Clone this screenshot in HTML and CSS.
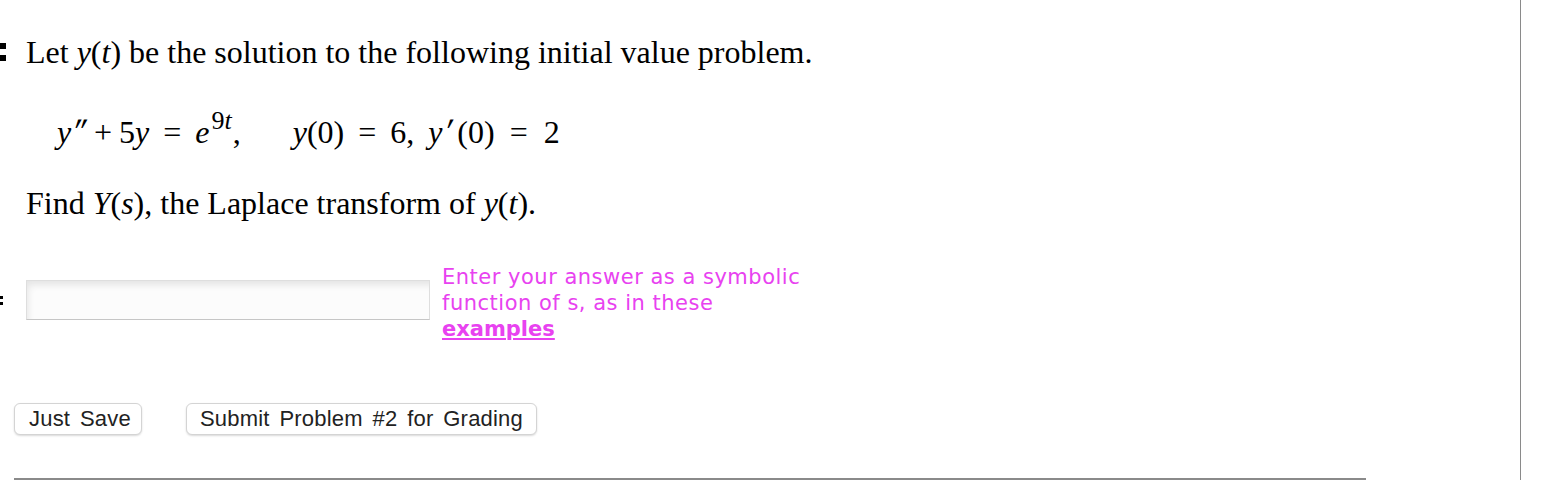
FILE: index.html
```html
<!DOCTYPE html>
<html>
<head>
<meta charset="utf-8">
<link rel="stylesheet" href="styles.css">
</head>
<body>
<div class="page">
  <div class="main">
    <div class="row first">
      <span class="marker big"><i></i><i></i></span>
      <p class="text">Let <em>y</em>(<em>t</em>) be the solution to the following initial value problem.</p>
    </div>
    <p class="eq"><em>y</em><span class="pr">′′</span><span class="op">+</span>5<em>y</em><span class="rel">=</span><em>e</em><sup>9<em>t</em></sup>,<span class="gap"></span><em>y</em>(0)<span class="rel">=</span>6,<span class="sp"></span><em>y</em><span class="pr one">′</span>(0)<span class="rel">=</span>2</p>
    <p class="text find">Find <em>Y</em>(<em>s</em>), the Laplace transform of <em>y</em>(<em>t</em>).</p>
    <div class="row answer">
      <span class="marker small"><i></i><i></i></span>
      <input class="field" type="text">
      <p class="hint">Enter your answer as a symbolic function of s, as in these <a href="#">examples</a></p>
    </div>
    <div class="buttons">
      <button class="btn save">Just Save</button>
      <button class="btn submit">Submit Problem #2 for Grading</button>
    </div>
    <div class="rule"></div>
  </div>
</div>
</body>
</html>
```

FILE: styles.css
```css
html, body {
  margin: 0;
  padding: 0;
  background: #ffffff;
}
.page {
  width: 1521px;
  height: 480px;
  border-right: 1px solid #8a8a8a;
  box-sizing: border-box;
  overflow: hidden;
}
.main {
  padding-top: 35px;
}
.row {
  display: flex;
  align-items: center;
}
.marker {
  width: 26px;
  flex: none;
  display: flex;
  flex-direction: column;
}
.marker i {
  display: block;
  background: #000;
}
.marker.big {
  gap: 6px;
}
.marker.big i {
  width: 6px;
  height: 6px;
}
.marker.small {
  gap: 3px;
}
.marker.small i {
  width: 3px;
  height: 3px;
}
.text {
  margin: 0;
  font-family: "Liberation Serif", "Times New Roman", serif;
  font-size: 32px;
  line-height: 34px;
  color: #000;
}
.text em, .eq em {
  font-style: italic;
}
.eq {
  margin: 43px 0 0 57px;
  height: 40px;
  font-family: "Liberation Serif", "Times New Roman", serif;
  font-size: 32px;
  line-height: 40px;
  color: #000;
  white-space: nowrap;
}
.eq .pr {
  display: inline-block;
  font-size: 36px;
  line-height: 0;
  letter-spacing: -2px;
  margin-left: 2px;
  margin-right: 2px;
  transform: skewX(-12deg);
}
.eq .pr.one {
  letter-spacing: 0;
  margin-left: 3px;
  margin-right: 4px;
}
.eq .op {
  margin: 0 7px;
}
.eq .rel {
  margin: 0 14px;
}
.eq .rel:last-of-type {
  margin: 0 16px 0 15px;
}
.eq sup {
  font-size: 26px;
  vertical-align: 14px;
  line-height: 0;
  margin-left: 2px;
  margin-right: 1px;
}
.eq .gap {
  display: inline-block;
  width: 52px;
}
.eq .sp {
  display: inline-block;
  width: 14px;
}
.find {
  margin: 34px 0 0 26px;
}
.answer {
  margin-top: 38px;
  align-items: center;
}
.field {
  width: 404px;
  height: 40px;
  box-sizing: border-box;
  border: 1px solid #dedede;
  border-bottom-color: #c6c6c6;
  background: #fcfcfc;
  box-shadow: inset 4px 7px 7px -3px #e4e4e4;
  margin: 0 12px 0 0;
  padding: 0;
}
.hint {
  margin: 6px 0 0 0;
  width: 380px;
  font-family: "DejaVu Sans", Verdana, sans-serif;
  font-size: 21px;
  letter-spacing: 0.5px;
  line-height: 26px;
  color: #e842f0;
}
.hint a {
  color: #e842f0;
  font-weight: bold;
  letter-spacing: 0;
}
.buttons {
  display: flex;
  gap: 44px;
  margin: 61px 0 0 14px;
}
.btn {
  font-family: "Liberation Sans", Helvetica, Arial, sans-serif;
  font-size: 22px;
  letter-spacing: 0.2px;
  word-spacing: 3.5px;
  color: #222;
  background: #fff;
  border: 1px solid #d4d4d4;
  border-radius: 6px;
  box-shadow: 0 1px 2px rgba(0,0,0,0.15);
  height: 32px;
  padding: 0 13px;
  line-height: 30px;
}
.btn.save {
  padding: 0 10px 0 14px;
}
.rule {
  margin: 43px 0 0 14px;
  width: 1352px;
  height: 2px;
  background: #8a8a8a;
}
```
